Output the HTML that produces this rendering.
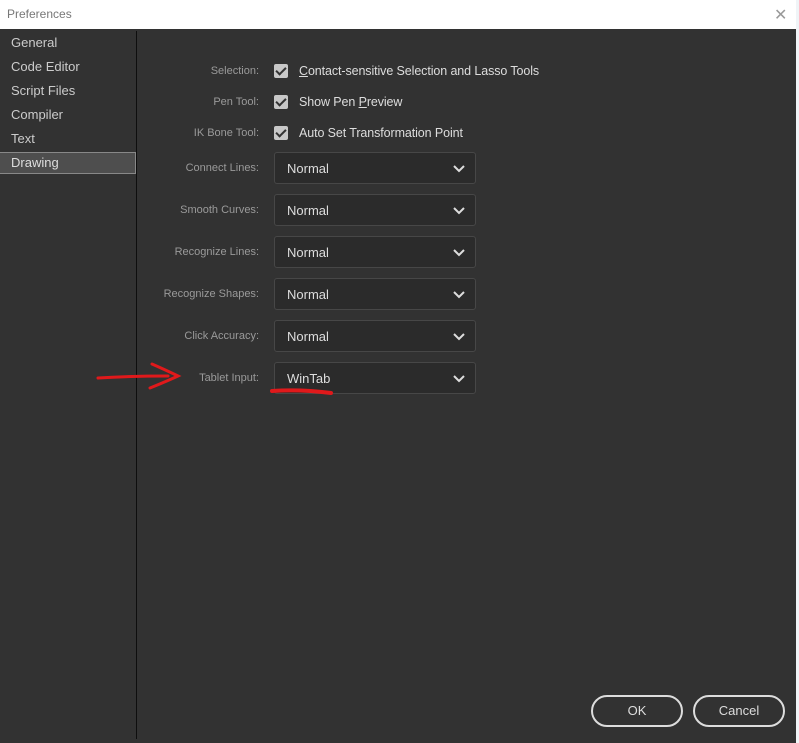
<!DOCTYPE html>
<html><head><style>
body{margin:0;width:799px;height:743px;background:#fff;font-family:"Liberation Sans",sans-serif;position:relative;overflow:hidden}
.title{position:absolute;left:0;top:0;width:796px;height:29px;background:#fff;color:#777;font-size:12px}
.title span{position:absolute;left:7px;top:7px}
.x{position:absolute;left:774px;top:5px;font-size:16px;color:#999;font-weight:100}
.main{position:absolute;left:0;top:29px;width:796px;height:714px;background:#323232}
.edge{position:absolute;left:796px;top:0;width:3px;height:743px;background:#f0f4f7}
.side{position:absolute;left:0;top:31px;width:136px;height:708px;background:#323232;border-right:1px solid #0e0e0e}
.side div{height:24px;line-height:24px;padding-left:11px;color:#ccc;font-size:13px}
.side .sel{background:#4e4e4e;border:1px solid #888;border-left:none;color:#ddd;height:20px;line-height:20px;margin-top:1px}
.lbl{position:absolute;width:259px;left:0;text-align:right;color:#9a9a9a;font-size:11px}
.cb{position:absolute;left:274px;width:14px;height:14px;background:#c8c8c8;border-radius:2px}
.cb::after{content:"";position:absolute;left:4px;top:1px;width:4px;height:8px;border:solid #333;border-width:0 2px 2px 0;transform:rotate(45deg)}
.ct{position:absolute;left:299px;color:#ddd;font-size:12.5px;letter-spacing:-0.1px}
.dd{position:absolute;left:274px;width:200px;height:30px;border:1px solid #474747;border-radius:3px;background:#2b2b2b;color:#ddd;font-size:13px}
.dd span{position:absolute;left:12px;top:8px}
.dd svg{position:absolute;right:10px;top:12px}
.btn{position:absolute;top:695px;height:28px;border:2px solid #ddd;border-radius:16px;color:#ddd;font-size:13px;text-align:center;line-height:28px}
</style></head><body>
<div class="title"><span>Preferences</span><div class="x">✕</div></div>
<div class="main"></div>
<div class="edge"></div>
<div class="side"><div>General</div><div>Code Editor</div><div>Script Files</div><div>Compiler</div><div>Text</div><div class="sel">Drawing</div></div>
<div class="lbl" style="top:65px">Selection:</div><div class="cb" style="top:64px"></div><div class="ct" style="top:64px"><u>C</u>ontact-sensitive Selection and Lasso Tools</div>
<div class="lbl" style="top:96px">Pen Tool:</div><div class="cb" style="top:95px"></div><div class="ct" style="top:95px">Show Pen <u>P</u>review</div>
<div class="lbl" style="top:127px">IK Bone Tool:</div><div class="cb" style="top:126px"></div><div class="ct" style="top:126px">Auto Set Transformation Point</div>
<div class="lbl" style="top:162px">Connect Lines:</div><div class="dd" style="top:152px"><span>Normal</span><svg width="12" height="8"><path d="M1 1l5 5 5-5" stroke="#ddd" stroke-width="2" fill="none"/></svg></div>
<div class="lbl" style="top:204px">Smooth Curves:</div><div class="dd" style="top:194px"><span>Normal</span><svg width="12" height="8"><path d="M1 1l5 5 5-5" stroke="#ddd" stroke-width="2" fill="none"/></svg></div>
<div class="lbl" style="top:246px">Recognize Lines:</div><div class="dd" style="top:236px"><span>Normal</span><svg width="12" height="8"><path d="M1 1l5 5 5-5" stroke="#ddd" stroke-width="2" fill="none"/></svg></div>
<div class="lbl" style="top:288px">Recognize Shapes:</div><div class="dd" style="top:278px"><span>Normal</span><svg width="12" height="8"><path d="M1 1l5 5 5-5" stroke="#ddd" stroke-width="2" fill="none"/></svg></div>
<div class="lbl" style="top:330px">Click Accuracy:</div><div class="dd" style="top:320px"><span>Normal</span><svg width="12" height="8"><path d="M1 1l5 5 5-5" stroke="#ddd" stroke-width="2" fill="none"/></svg></div>
<div class="lbl" style="top:372px">Tablet Input:</div><div class="dd" style="top:362px"><span>WinTab</span><svg width="12" height="8"><path d="M1 1l5 5 5-5" stroke="#ddd" stroke-width="2" fill="none"/></svg></div>
<svg style="position:absolute;left:0;top:0" width="799" height="743"><path d="M98 378 Q130 376 168 376 M152 364 Q170 372 178 376 Q165 382 150 388" stroke="#e0191b" stroke-width="3" fill="none" stroke-linecap="round"/><path d="M272 391 Q300 389 331 393" stroke="#e0191b" stroke-width="4" fill="none" stroke-linecap="round"/></svg>
<div class="btn" style="left:591px;width:88px">OK</div>
<div class="btn" style="left:693px;width:88px">Cancel</div>
</body></html>
